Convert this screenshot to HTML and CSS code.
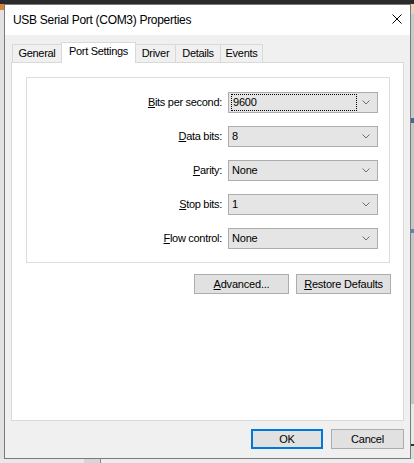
FILE: index.html
```html
<!DOCTYPE html>
<html lang="en">
<head>
<meta charset="utf-8">
<title>USB Serial Port (COM3) Properties</title>
<link rel="stylesheet" href="styles.css">
</head>
<body>
<div class="desk">
  <div class="topbar"></div>
  <div class="side-left"></div>
  <div class="window">
    <div class="titlebar">
      <span class="title">USB Serial Port (COM3) Properties</span>
      <span class="close">
        <svg width="10" height="10" viewBox="0 0 10 10"><path d="M0.5 0.5L9.5 9.5M9.5 0.5L0.5 9.5" stroke="#000" stroke-width="1" fill="none"/></svg>
      </span>
    </div>
    <div class="client">
      <div class="tabs">
        <div class="tab tab-general">General</div>
        <div class="tab tab-port selected">Port Settings</div>
        <div class="tab tab-driver">Driver</div>
        <div class="tab tab-details">Details</div>
        <div class="tab tab-events">Events</div>
      </div>
      <div class="panel">
        <div class="group">
          <div class="label"><u>B</u>its per second:</div>
          <div class="combo"><span class="value focus">9600</span><svg class="chev" width="8" height="5" viewBox="0 0 8 5"><path d="M0.5 0.5L4 4L7.5 0.5" stroke="#6d6d6d" fill="none"/></svg></div>
          <div class="label"><u>D</u>ata bits:</div>
          <div class="combo"><span class="value">8</span><svg class="chev" width="8" height="5" viewBox="0 0 8 5"><path d="M0.5 0.5L4 4L7.5 0.5" stroke="#6d6d6d" fill="none"/></svg></div>
          <div class="label"><u>P</u>arity:</div>
          <div class="combo"><span class="value">None</span><svg class="chev" width="8" height="5" viewBox="0 0 8 5"><path d="M0.5 0.5L4 4L7.5 0.5" stroke="#6d6d6d" fill="none"/></svg></div>
          <div class="label"><u>S</u>top bits:</div>
          <div class="combo"><span class="value">1</span><svg class="chev" width="8" height="5" viewBox="0 0 8 5"><path d="M0.5 0.5L4 4L7.5 0.5" stroke="#6d6d6d" fill="none"/></svg></div>
          <div class="label"><u>F</u>low control:</div>
          <div class="combo"><span class="value">None</span><svg class="chev" width="8" height="5" viewBox="0 0 8 5"><path d="M0.5 0.5L4 4L7.5 0.5" stroke="#6d6d6d" fill="none"/></svg></div>
        </div>
        <div class="btnrow">
          <button class="btn btn-wide"><u>A</u>dvanced...</button>
          <button class="btn btn-wide"><u>R</u>estore Defaults</button>
        </div>
      </div>
      <div class="footer">
        <button class="btn btn-ok">OK</button>
        <button class="btn btn-cancel">Cancel</button>
      </div>
    </div>
  </div>
  <div class="side-right"></div>
  <div class="bottombar"></div>
</div>
</body>
</html>
```
FILE: styles.css
```css
html, body {
  margin: 0;
  padding: 0;
}
body {
  width: 414px;
  height: 463px;
  overflow: hidden;
  background: #e6e6e6;
  font-family: "Liberation Sans", Arial, sans-serif;
  font-size: 11px;
  color: #000;
}
.desk {
  display: grid;
  grid-template-rows: 4px 455px 4px;
  grid-template-columns: 4px 407px 3px;
  width: 414px;
  height: 463px;
}
.topbar {
  grid-column: 1 / -1;
  background: #2b2b2b;
}
.side-left {
  background: linear-gradient(#d8843a 0 6px, #e2e2e2 6px);
}
.side-right {
  background: linear-gradient(#e9d2bd 0 10px, #c9c9c9 10px 114px, #3d6e9a 114px 119px, #c6c6c6 119px 225px, #5a87b3 225px 229px, #c6c6c6 229px 400px, #e8e8e8 400px 440px, #303030 440px 442px, #dcdcdc 442px);
}
.bottombar {
  grid-column: 1 / -1;
  background: linear-gradient(to right, #e9e9e9 0 84px, #d6d6d6 84px 100px, #8a8a8a 100px 101px, #ececec 101px);
}
.window {
  box-sizing: border-box;
  border: 1px solid #7a7a7a;
  background: #f0f0f0;
  display: flex;
  flex-direction: column;
}
.titlebar {
  height: 30px;
  flex: none;
  background: #fff;
  display: flex;
  align-items: center;
  justify-content: space-between;
  padding: 0 8px 0 8px;
}
.title {
  font-size: 12px;
  letter-spacing: -0.3px;
  color: #000;
}
.close {
  display: flex;
  margin-top: -2px;
}
.client {
  flex: 1;
  display: flex;
  flex-direction: column;
  padding: 7px 6px 0 6px;
}
.tabs {
  display: flex;
  align-items: flex-end;
  height: 20px;
  padding-left: 1px;
  flex: none;
}
.tab {
  box-sizing: border-box;
  height: 18px;
  border: 1px solid #d9d9d9;
  border-bottom: none;
  background: #f0f0f0;
  margin-left: -1px;
  text-align: center;
  line-height: 17px;
  letter-spacing: -0.3px;
  white-space: nowrap;
}
.tab-general { margin-left: 0; width: 50px; }
.tab-port { width: 75px; }
.tab-driver { width: 41px; }
.tab-details { width: 46px; }
.tab-events { width: 43px; }
.tab.selected {
  height: 21px;
  margin-bottom: -1px;
  background: #fff;
  position: relative;
  z-index: 1;
  line-height: 16px;
}
.panel {
  box-sizing: border-box;
  height: 359px;
  flex: none;
  border: 1px solid #d9d9d9;
  background: #fff;
  display: flex;
  flex-direction: column;
}
.group {
  margin: 14px 13px 0 14px;
  border: 1px solid #dcdcdc;
  display: grid;
  grid-template-columns: 1fr 150px;
  column-gap: 6px;
  row-gap: 13px;
  padding: 14px 11px 13px 0;
}
.label {
  text-align: right;
  line-height: 21px;
  height: 21px;
  letter-spacing: -0.3px;
  white-space: nowrap;
}
.combo {
  box-sizing: border-box;
  height: 21px;
  border: 1px solid #adadad;
  background: #e5e5e5;
  display: flex;
  align-items: center;
  padding: 0 7px 0 3px;
}
.value {
  flex: 1;
  line-height: 19px;
  letter-spacing: -0.2px;
}
.value.focus {
  box-sizing: border-box;
  height: 17px;
  line-height: 15px;
  border: 1px dotted #000;
  margin: 0 5px 0 -1px;
  padding-left: 1px;
}
.chev {
  flex: none;
  display: block;
}
.btnrow {
  display: flex;
  justify-content: flex-end;
  gap: 7px;
  margin: 11px 12px 0 0;
}
.btn {
  box-sizing: border-box;
  height: 20px;
  margin: 0;
  padding: 1px 0 0 0;
  border: 1px solid #adadad;
  background: #e1e1e1;
  font-family: "Liberation Sans", Arial, sans-serif;
  font-size: 11px;
  letter-spacing: -0.2px;
  color: #000;
  line-height: 17px;
  text-align: center;
  white-space: nowrap;
}
.btn-wide { width: 95px; }
.footer {
  display: flex;
  justify-content: flex-end;
  gap: 8px;
  padding-top: 8px;
}
.btn-ok {
  width: 72px;
  border: 2px solid #0078d7;
  line-height: 15px;
}
.btn-cancel {
  width: 73px;
}
```
